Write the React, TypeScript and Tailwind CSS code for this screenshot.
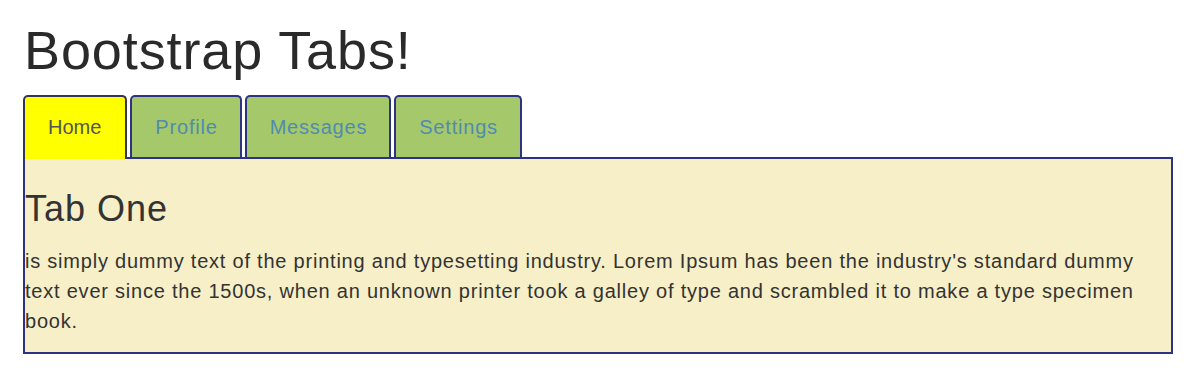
import React from "react";

const tabs = ["Home", "Profile", "Messages", "Settings"];

export default function App() {
  return (
    <div className="bg-white w-[1200px] h-[392px] pl-[23px] pt-[20px] font-['Liberation_Sans',Arial,sans-serif] text-[#333]">
      <h1 className="text-[54px] tracking-[0.9px] leading-[60px] mb-[15px] pl-[1px] text-[#2a2a2a]">Bootstrap Tabs!</h1>
      <div className="flex items-start gap-[3px] h-[62px]">
        {tabs.map((t, i) =>
          i === 0 ? (
            <div
              key={t}
              className="relative z-10 h-[64px] -mb-[2px] border-2 border-b-0 border-[#34345a] rounded-t-[5px] bg-[#ffff00] pl-[23px] pr-[24px] pt-[16px] text-[20px] leading-[28px] text-[#555]"
            >
              {t}
            </div>
          ) : (
            <div
              key={t}
              className="h-[62px] border-2 border-b-0 border-[#2e3285] rounded-t-[5px] bg-[#a5c86b] pl-[23px] pr-[22px] pt-[16px] text-[20px] tracking-[0.8px] leading-[28px] text-[#4f8cb0]"
            >
              {t}
            </div>
          )
        )}
      </div>
      <div className="w-[1150px] border-2 border-[#2e3285] bg-[#f7efc8] pt-[30px] pb-[16px]">
        <h3 className="text-[36px] tracking-[1px] leading-[40px] mb-[17px]">Tab One</h3>
        <p className="text-[20px] tracking-[0.78px] leading-[30px]">
          is simply dummy text of the printing and typesetting industry. Lorem Ipsum has been the industry's standard dummy text ever since the 1500s, when an unknown printer took a galley of type and scrambled it to make a type specimen book.
        </p>
      </div>
    </div>
  );
}
